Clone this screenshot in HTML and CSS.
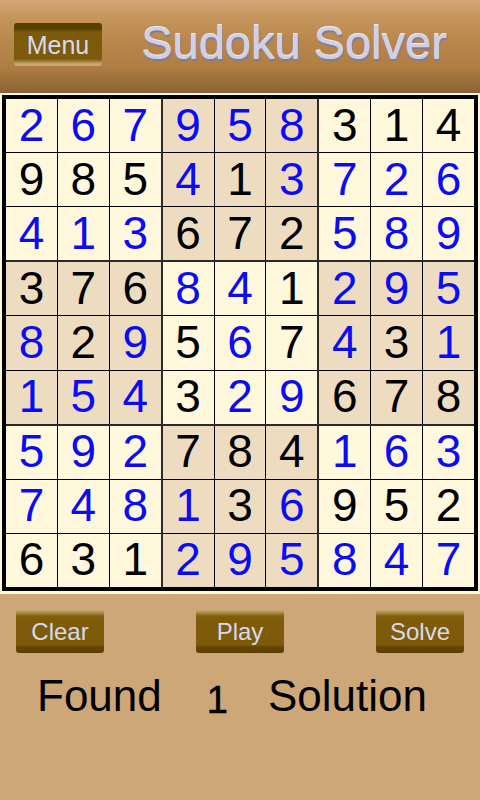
FILE: index.html
```html
<!DOCTYPE html>
<html>
<head>
<meta charset="utf-8">
<title>Sudoku Solver</title>
<link rel="stylesheet" href="styles.css">
</head>
<body>
<div class="app">
  <header class="topbar">
    <button class="btn btn-menu">Menu</button>
    <h1 class="title">Sudoku Solver</h1>
  </header>

  <div class="board-wrap">
    <div class="board">
      <div class="box light">
        <div class="cell s">2</div><div class="cell s">6</div><div class="cell s">7</div>
        <div class="cell">9</div><div class="cell">8</div><div class="cell">5</div>
        <div class="cell s">4</div><div class="cell s">1</div><div class="cell s">3</div>
      </div>
      <div class="box dark">
        <div class="cell s">9</div><div class="cell s">5</div><div class="cell s">8</div>
        <div class="cell s">4</div><div class="cell">1</div><div class="cell s">3</div>
        <div class="cell">6</div><div class="cell">7</div><div class="cell">2</div>
      </div>
      <div class="box light">
        <div class="cell">3</div><div class="cell">1</div><div class="cell">4</div>
        <div class="cell s">7</div><div class="cell s">2</div><div class="cell s">6</div>
        <div class="cell s">5</div><div class="cell s">8</div><div class="cell s">9</div>
      </div>
      <div class="box dark">
        <div class="cell">3</div><div class="cell">7</div><div class="cell">6</div>
        <div class="cell s">8</div><div class="cell">2</div><div class="cell s">9</div>
        <div class="cell s">1</div><div class="cell s">5</div><div class="cell s">4</div>
      </div>
      <div class="box light">
        <div class="cell s">8</div><div class="cell s">4</div><div class="cell">1</div>
        <div class="cell">5</div><div class="cell s">6</div><div class="cell">7</div>
        <div class="cell">3</div><div class="cell s">2</div><div class="cell s">9</div>
      </div>
      <div class="box dark">
        <div class="cell s">2</div><div class="cell s">9</div><div class="cell s">5</div>
        <div class="cell s">4</div><div class="cell">3</div><div class="cell s">1</div>
        <div class="cell">6</div><div class="cell">7</div><div class="cell">8</div>
      </div>
      <div class="box light">
        <div class="cell s">5</div><div class="cell s">9</div><div class="cell s">2</div>
        <div class="cell s">7</div><div class="cell s">4</div><div class="cell s">8</div>
        <div class="cell">6</div><div class="cell">3</div><div class="cell">1</div>
      </div>
      <div class="box dark">
        <div class="cell">7</div><div class="cell">8</div><div class="cell">4</div>
        <div class="cell s">1</div><div class="cell">3</div><div class="cell s">6</div>
        <div class="cell s">2</div><div class="cell s">9</div><div class="cell s">5</div>
      </div>
      <div class="box light">
        <div class="cell s">1</div><div class="cell s">6</div><div class="cell s">3</div>
        <div class="cell">9</div><div class="cell">5</div><div class="cell">2</div>
        <div class="cell s">8</div><div class="cell s">4</div><div class="cell s">7</div>
      </div>
    </div>
  </div>

  <div class="actions">
    <button class="btn btn-action">Clear</button>
    <button class="btn btn-action">Play</button>
    <button class="btn btn-action">Solve</button>
  </div>

  <p class="status"><span class="word">Found</span><span class="count">1</span><span class="word word-last">Solution</span></p>
</div>
</body>
</html>
```

FILE: styles.css
```css
html, body {
  margin: 0;
  padding: 0;
}

body {
  width: 480px;
  height: 800px;
  overflow: hidden;
  background: #cda778;
  font-family: "Liberation Sans", Arial, sans-serif;
}

.app {
  display: flex;
  flex-direction: column;
  width: 480px;
  height: 800px;
}

/* ---------- header ---------- */
.topbar {
  height: 93px;
  display: flex;
  align-items: flex-start;
  background: linear-gradient(to bottom,
    #d2a575 0%,
    #c4935a 22%,
    #b9874c 45%,
    #b07f45 70%,
    #9a6f3a 88%,
    #8a6232 100%);
}

.btn {
  border: none;
  margin: 0;
  padding: 0;
  font-family: "Liberation Sans", Arial, sans-serif;
  font-size: 24px;
  color: #d9d9ec;
  width: 88px;
  height: 43px;
  border-radius: 3px;
  cursor: pointer;
}

.btn-menu {
  margin: 23px 0 0 14px;
  line-height: 44px;
  font-size: 25px;
  background: linear-gradient(to bottom,
    #563e02 0px,
    #5a4103 6px,
    #7b5a0b 9px,
    #7d5b0a 36px,
    #9a7a3a 38px,
    #c4a86e 41px,
    #c9ad74 43px);
}

.title {
  flex: 1;
  margin: 19px 0 0 0;
  font-size: 47px;
  line-height: 47px;
  font-weight: normal;
  text-align: center;
  color: #cfd0e6;
  text-shadow: 0 -1px 0 #eeeefa, 1px 2px 1px #7c7d98;
  padding-left: 6px;
}

/* ---------- board ---------- */
.board-wrap {
  background: #fff8dc;
  padding: 2px 2px 3px 2px;
}

.board {
  height: 488px;
  border: 4px solid #000;
  display: grid;
  grid-template-columns: repeat(3, 1fr);
  grid-template-rows: repeat(3, 1fr);
  gap: 2px;
  background: #2a2a2a;
}

.box {
  display: grid;
  grid-template-columns: repeat(3, 1fr);
  grid-template-rows: repeat(3, 1fr);
  gap: 1px;
  background: #000;
}

.box.light .cell {
  background: #fff8dc;
}

.box.dark .cell {
  background: #eedcc0;
}

.cell {
  display: flex;
  align-items: center;
  justify-content: center;
  font-size: 46px;
  line-height: 46px;
  color: #000;
  padding-bottom: 2px;
}

.cell.s {
  color: #0b0bf5;
}

/* ---------- actions ---------- */
.actions {
  display: flex;
  justify-content: space-between;
  padding: 0 16px;
  margin-top: 16px;
}

.btn-action {
  line-height: 42px;
  background: linear-gradient(to bottom,
    #c5a86c 0px,
    #a98a45 3px,
    #81600f 6px,
    #7d5b0a 10px,
    #7d5b0a 35px,
    #634503 37px,
    #5c4000 43px);
}

/* ---------- status ---------- */
.status {
  margin: 17px 0 0 0;
  padding-left: 37px;
  font-size: 44px;
  line-height: 52px;
  color: #000;
  white-space: nowrap;
}

.count {
  display: inline-block;
  font-size: 38px;
  margin-left: 45px;
  vertical-align: -2px;
  -webkit-text-stroke: 0.6px #000;
}

.word-last {
  margin-left: 40px;
}
```
